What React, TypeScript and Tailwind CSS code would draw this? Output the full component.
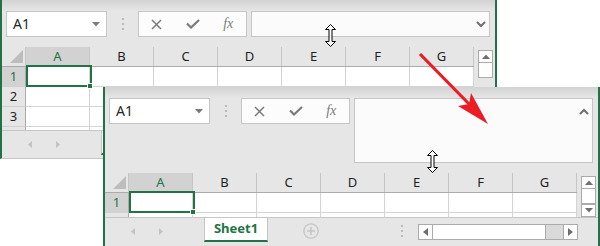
const cols = ["A", "B", "C", "D", "E", "F", "G"]

function Cursor({ className }: { className: string }) {
  return (
    <svg className={`absolute ${className}`} width="11" height="23" viewBox="0 0 11 23">
      <path
        d="M5.5 0.5 L10.5 5.5 L7 5.5 L7 17.5 L10.5 17.5 L5.5 22.5 L0.5 17.5 L4 17.5 L4 5.5 L0.5 5.5 Z"
        fill="white"
        stroke="black"
      />
    </svg>
  )
}

function VDots({ color = "#b9b9b9" }: { color?: string }) {
  return (
    <svg width="2" height="12" viewBox="0 0 2 12">
      <rect x="0" y="0" width="2" height="2" fill={color} />
      <rect x="0" y="5" width="2" height="2" fill={color} />
      <rect x="0" y="10" width="2" height="2" fill={color} />
    </svg>
  )
}

function FormulaRow({ tall }: { tall: boolean }) {
  return (
    <div className={`flex shrink-0 items-start pl-[4px] ${tall ? "h-[65px]" : "h-[26px]"}`}>
      {/* name box */}
      <div className="flex h-[26px] w-[101px] items-center justify-between border border-[#c6c6c6] bg-white px-[6px]">
        <span className="text-[14px] leading-none text-[#262626]">A1</span>
        <svg width="8" height="5" viewBox="0 0 8 5">
          <polygon points="0,0 8,0 4,4.5" fill="#7a7a7a" />
        </svg>
      </div>
      <div className="flex h-[26px] w-[31px] items-center justify-center">
        <VDots />
      </div>
      {/* cancel / enter / fx */}
      <div className="flex h-[26px] w-[109px] items-center border border-[#c6c6c6] bg-[#fcfcfc]">
        <span className="flex w-[36px] justify-center">
          <svg width="11" height="11" viewBox="0 0 11 11">
            <path d="M1 1 L10 10 M10 1 L1 10" stroke="#7b7b7b" strokeWidth="1.5" />
          </svg>
        </span>
        <span className="flex w-[36px] justify-center">
          <svg width="14" height="10" viewBox="0 0 14 10">
            <path d="M1 4.5 L5 8.5 L13 1" stroke="#7b7b7b" strokeWidth="2.2" fill="none" />
          </svg>
        </span>
        <span className="flex w-[36px] justify-center font-['Liberation_Serif',serif] text-[14px] italic leading-none text-[#7b7b7b]">
          fx
        </span>
      </div>
      {/* formula bar */}
      <div
        className={`ml-[4px] flex w-[239px] justify-end border border-[#c6c6c6] bg-[#fbfbfb] pr-[3px] ${
          tall ? "h-[65px]" : "h-[26px]"
        }`}
      >
        <div className="flex h-[24px] items-center">
          <svg width="10" height="7" viewBox="0 0 10 7">
            <path
              d={tall ? "M1 6 L5 2 L9 6" : "M1 1 L5 5 L9 1"}
              stroke="#6f6f6f"
              strokeWidth="2"
              fill="none"
            />
          </svg>
        </div>
      </div>
    </div>
  )
}

function Grid({ rows, partial }: { rows: number; partial: string }) {
  const nums = Array.from({ length: rows }, (_, i) => i + 1)
  return (
    <div className="mt-[10px] flex shrink-0">
      <div className="flex w-[472px] flex-col">
        {/* column headers */}
        <div className="flex h-[20px] border-b border-[#ababab]">
          <div className="w-[24px] border-r border-[#c6c6c6]">
            <svg width="23" height="19" viewBox="0 0 23 19">
              <polygon points="21,3 21,16 8,16" fill="#bdbdbd" />
            </svg>
          </div>
          {cols.map((c) => (
            <div
              key={c}
              className={`flex w-[64px] items-center justify-center border-r border-[#c6c6c6] text-[13px] ${
                c === "A" ? "bg-[#d2d2d2] text-[#217346]" : "text-[#1f1f1f]"
              }`}
            >
              {c}
            </div>
          ))}
        </div>
        {/* rows */}
        {nums.map((r) => (
          <div key={r} className="flex h-[20px]">
            <div
              className={`flex w-[24px] items-center justify-center border-b border-r border-b-[#d0d0d0] border-r-[#ababab] text-[13px] ${
                r === 1 ? "bg-[#d2d2d2] text-[#217346]" : "text-[#1f1f1f]"
              }`}
            >
              {r}
            </div>
            {cols.map((c) =>
              r === 1 && c === "A" ? (
                <div key={c} className="relative w-[64px] border-b border-r border-[#d4d4d4] bg-white">
                  <div className="absolute left-0 top-[-2px] z-10 h-[22px] w-[66px] border-2 border-[#217346]" />
                  <div className="absolute left-[61px] top-[16px] z-10 h-[6px] w-[6px] border border-white bg-[#217346]" />
                </div>
              ) : (
                <div key={c} className="w-[64px] border-b border-r border-[#d4d4d4] bg-white" />
              )
            )}
          </div>
        ))}
        {/* partly visible row */}
        <div className={`flex overflow-hidden ${partial}`}>
          <div className="w-[24px] border-r border-[#ababab]" />
          {cols.map((c) => (
            <div key={c} className="w-[64px] border-r border-[#d4d4d4] bg-white" />
          ))}
        </div>
      </div>
      {/* vertical scrollbar */}
      <div className="ml-[4px] mt-[3px] flex w-[15px] flex-col">
        <div className="flex h-[13px] items-center justify-center border border-[#ababab] bg-white">
          <svg width="8" height="5" viewBox="0 0 8 5">
            <polygon points="0,5 8,5 4,0.5" fill="#6f6f6f" />
          </svg>
        </div>
        <div className="h-[15px] border border-t-0 border-[#ababab] bg-white" />
        <div className="flex-1" />
        <div className="flex h-[13px] items-center justify-center border border-[#ababab] bg-white">
          <svg width="8" height="5" viewBox="0 0 8 5">
            <polygon points="0,0 8,0 4,4.5" fill="#6f6f6f" />
          </svg>
        </div>
      </div>
    </div>
  )
}

function SheetBar() {
  return (
    <div className="flex flex-1 items-start border-t border-[#c6c6c6]">
      <div className="flex h-[26px] w-[99px] items-center gap-[24px] pl-[26px]">
        <svg width="4" height="7" viewBox="0 0 4 7">
          <polygon points="4,0 4,7 0,3.5" fill="#c3c3c3" />
        </svg>
        <svg width="4" height="7" viewBox="0 0 4 7">
          <polygon points="0,0 0,7 4,3.5" fill="#c3c3c3" />
        </svg>
      </div>
      <div className="flex h-[24px] w-[64px] items-center justify-center border-x border-b-2 border-x-[#c6c6c6] border-b-[#217346] bg-white text-[13px] font-bold text-[#217346]">
        Sheet1
      </div>
      <div className="ml-[35px] flex h-[26px] items-center">
        <svg width="16" height="16" viewBox="0 0 16 16">
          <circle cx="8" cy="8" r="7.2" stroke="#c6c6c6" strokeWidth="1.3" fill="none" />
          <path d="M4 8 H12 M8 4 V12" stroke="#c6c6c6" strokeWidth="1.6" />
        </svg>
      </div>
      <div className="ml-[82px] flex h-[26px] items-center">
        <VDots color="#bcbcbc" />
      </div>
      {/* horizontal scrollbar */}
      <div className="ml-[15px] mt-[6px] flex h-[16px] w-[160px] border border-[#ababab]">
        <div className="flex w-[14px] items-center justify-center border-r border-[#ababab] bg-white">
          <svg width="5" height="8" viewBox="0 0 5 8">
            <polygon points="5,0 5,8 0,4" fill="#6f6f6f" />
          </svg>
        </div>
        <div className="w-[113px] border-r border-[#ababab] bg-white" />
        <div className="flex-1 bg-[#dadada]" />
        <div className="flex w-[14px] items-center justify-center border-l border-[#ababab] bg-white">
          <svg width="5" height="8" viewBox="0 0 5 8">
            <polygon points="0,0 0,8 5,4" fill="#6f6f6f" />
          </svg>
        </div>
      </div>
    </div>
  )
}

function ExcelWindow({
  className,
  tall,
  rows,
  partial,
}: {
  className: string
  tall: boolean
  rows: number
  partial: string
}) {
  return (
    <div
      className={`absolute flex flex-col overflow-hidden border-x-2 border-b border-x-[#217346] border-b-[#c6c6c6] bg-[#e6e6e6] ${className}`}
    >
      <div className="h-[11px] shrink-0 bg-gradient-to-b from-[#d3d3d3] to-[#e6e6e6]" />
      <FormulaRow tall={tall} />
      <Grid rows={rows} partial={partial} />
      <SheetBar />
    </div>
  )
}

export default function App() {
  return (
    <div className="relative h-[246px] w-[600px] overflow-hidden bg-white font-['Noto_Sans',sans-serif]">
      <ExcelWindow className="left-0 top-0 h-[159px] w-[497px]" tall={false} rows={3} partial="h-[3px]" />
      <Cursor className="left-[325px] top-[24px]" />
      <ExcelWindow className="left-[103px] top-[87px] h-[160px] w-[497px]" tall rows={1} partial="h-[4px]" />
      <Cursor className="left-[427px] top-[150px]" />
      {/* red arrow */}
      <svg className="pointer-events-none absolute left-0 top-0" width="600" height="246" viewBox="0 0 600 246">
        <line x1="420" y1="54" x2="472" y2="107" stroke="#ec1c24" strokeWidth="3.2" />
        <polygon points="488,124 458,106 469,104 471,93" fill="#ec1c24" />
      </svg>
    </div>
  )
}
